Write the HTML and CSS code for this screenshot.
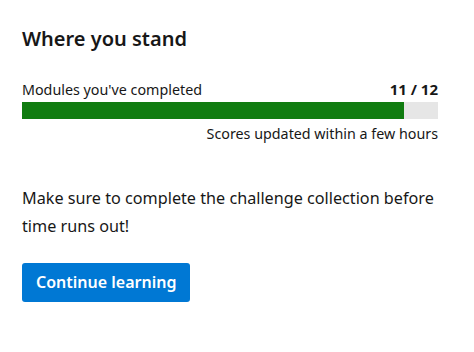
FILE: index.html
```html
<!DOCTYPE html>
<html lang="en">
<head>
    <meta charset="UTF-8">
    <title>Where you stand</title>
    <link rel="stylesheet" href="styles.css">
</head>
<body>
<div class="stand">
    <h2 class="stand-title">Where you stand</h2>
    <div class="progress">
        <div class="progress-head">
            <span>Modules you've completed</span>
            <span class="progress-count">11 / 12</span>
        </div>
        <div class="progress-bar">
            <div class="progress-fill" style="width: 91.8%"></div>
        </div>
        <p class="progress-note">Scores updated within a few hours</p>
    </div>
    <p class="stand-text">Make sure to complete the challenge collection before time runs out!</p>
    <a class="stand-btn" href="#">Continue learning</a>
</div>
</body>
</html>
```

FILE: styles.css
```css
*{
    margin: 0;
    padding: 0;
    box-sizing: border-box;
}
body{
    font-family: "Noto Sans", "Open Sans", sans-serif;
    color: #171717;
    background: #fff;
}
.stand{
    width: 474px;
    padding: 24px 36px 0 22px;
}
.stand-title{
    font-size: 20px;
    font-weight: 600;
    line-height: 30px;
}
.progress{
    margin-top: 26px;
}
.progress-head{
    display: flex;
    justify-content: space-between;
    align-items: flex-end;
    font-size: 14.3px;
    line-height: 19px;
}
.progress-count{
    font-weight: 700;
    font-size: 15px;
}
.progress-bar{
    margin-top: 3px;
    height: 17px;
    background: #e6e6e6;
}
.progress-fill{
    height: 100%;
    background: #107c10;
}
.progress-note{
    text-align: right;
    font-size: 14.3px;
    line-height: 20px;
    margin-top: 5px;
}
.stand-text{
    margin-top: 40px;
    font-size: 16.2px;
    line-height: 28px;
}
.stand-btn{
    display: inline-block;
    margin-top: 23px;
    background: #0078d4;
    color: #fff;
    font-weight: 600;
    font-size: 16px;
    line-height: 39px;
    padding: 0 14px;
    border-radius: 3px;
    text-decoration: none;
}
```
